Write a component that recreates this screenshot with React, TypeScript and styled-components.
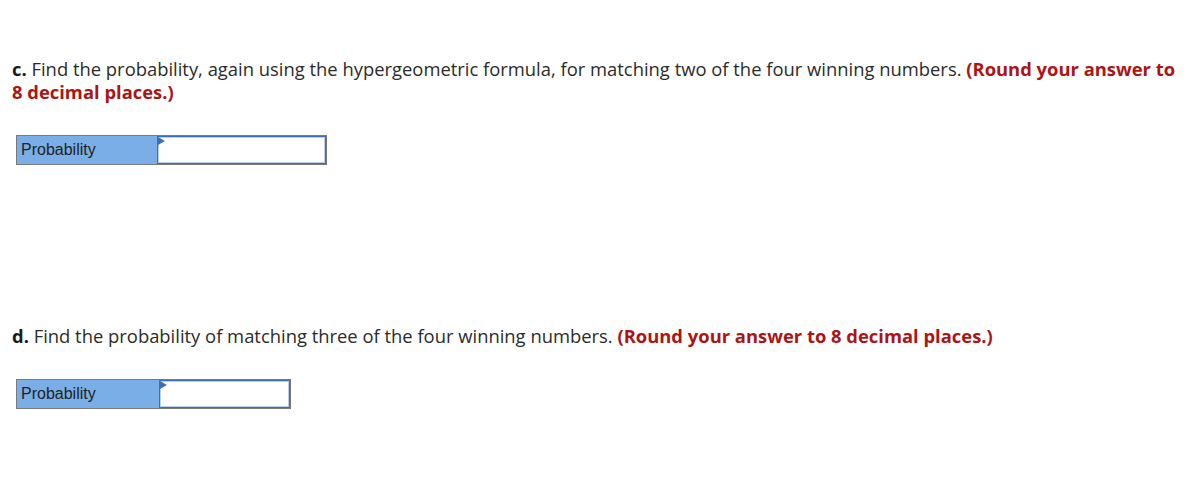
import React from 'react'
import styled, { createGlobalStyle } from 'styled-components'

const GlobalStyle = createGlobalStyle`
  body {
    margin: 0;
    background: #ffffff;
    font-family: "Open Sans", Lato, sans-serif;
    color: #2b2b2b;
  }
`

const Page = styled.div`
  padding: 57px 12px 0 12px;
`

const Part = styled.section<{ $gap: number }>`
  margin-bottom: ${(props) => props.$gap}px;
`

const Question = styled.p`
  margin: 0 0 32px 0;
  font-size: 18.4px;
  line-height: 23px;
`

const Letter = styled.b`
  font-weight: 700;
  color: #1a1a1a;
`

const Hint = styled.strong`
  font-weight: 700;
  color: #ad1414;
`

const AnswerTable = styled.div<{ $labelWidth: number; $inputWidth: number }>`
  display: flex;
  width: fit-content;
  margin-left: 4px;
  border: 1px solid #7a7a7a;
  & > span {
    width: ${(props) => props.$labelWidth}px;
  }
  & > div {
    width: ${(props) => props.$inputWidth}px;
  }
`

const Label = styled.span`
  box-sizing: border-box;
  background: #7aaee6;
  padding: 5px 4px;
  font-family: "Liberation Sans", Arial, sans-serif;
  font-size: 16px;
  line-height: 18px;
  color: #222;
`

const InputCell = styled.div`
  position: relative;
  box-sizing: border-box;
  background: #ffffff;
  border: 1px solid #3d6fb6;
  box-shadow: inset 0 0 0 1px #b8d0f0;
`

const Marker = styled.span`
  position: absolute;
  left: 0;
  top: 0;
  width: 0;
  height: 0;
  border-top: 4px solid transparent;
  border-bottom: 4px solid transparent;
  border-left: 7px solid #3d6fb6;
`

function Answer({ labelWidth, inputWidth }: { labelWidth: number; inputWidth: number }) {
  return (
    <AnswerTable $labelWidth={labelWidth} $inputWidth={inputWidth}>
      <Label>Probability</Label>
      <InputCell>
        <Marker />
      </InputCell>
    </AnswerTable>
  )
}

export default function App() {
  return (
    <>
      <GlobalStyle />
      <Page>
        <Part $gap={159}>
          <Question>
            <Letter>c.</Letter> Find the probability, again using the hypergeometric formula, for matching two of the four winning
            numbers. <Hint>(Round your answer to 8 decimal places.)</Hint>
          </Question>
          <Answer labelWidth={140} inputWidth={169} />
        </Part>
        <Part $gap={0}>
          <Question>
            <Letter>d.</Letter> Find the probability of matching three of the four winning numbers.{' '}
            <Hint>(Round your answer to 8 decimal places.)</Hint>
          </Question>
          <Answer labelWidth={142} inputWidth={131} />
        </Part>
      </Page>
    </>
  )
}
